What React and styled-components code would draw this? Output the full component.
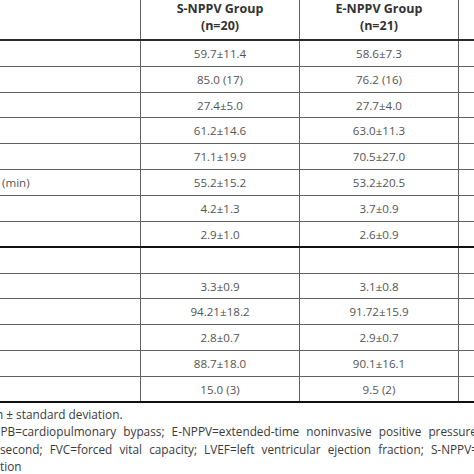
import React from "react";
import styled, { createGlobalStyle } from "styled-components";

const Global = createGlobalStyle`
  html, body {
    margin: 0;
    padding: 0;
    background: #fff;
    overflow: hidden;
  }
  body {
    width: 474px;
    height: 474px;
    font-family: "Open Sans", "Noto Sans", sans-serif;
  }
`;

const Page = styled.div`
  width: 474px;
  height: 474px;
  overflow: hidden;
  background: #fff;
`;

const Table = styled.div`
  width: 520px;
  display: flex;
  flex-direction: column;
`;

const Row = styled.div`
  display: grid;
  grid-template-columns: 141px 159px 159px 1fr;
  box-sizing: border-box;
  height: ${(p) => p.$h}px;
  border-bottom: ${(p) =>
    p.$rule === "thick"
      ? "2px solid #111"
      : p.$rule === "head"
      ? "2px solid #2a2a2a"
      : "1.5px solid #606060"};
`;

const Cell = styled.div`
  box-sizing: border-box;
  border-right: 1.5px solid #606060;
  display: flex;
  align-items: center;
  justify-content: ${(p) => (p.$left ? "flex-start" : "center")};
  padding-left: ${(p) => (p.$left ? "2px" : "0")};
  font-size: 11.6px;
  color: #555;
  white-space: nowrap;
  &:last-child {
    border-right: none;
  }
`;

const HeadCell = styled(Cell)`
  flex-direction: column;
  justify-content: flex-start;
  align-items: center;
  font-size: 12.5px;
  font-weight: 700;
  line-height: 17px;
  color: #333;
`;

const Notes = styled.div`
  padding-top: 3px;
  font-size: 11.8px;
  line-height: 17.4px;
  color: #3a3a3a;
`;

const NoteLine = styled.div`
  margin-left: ${(p) => p.$shift || 0}px;
  width: ${(p) => (p.$w ? `${p.$w}px` : "auto")};
  text-align: ${(p) => (p.$w ? "justify" : "left")};
  text-align-last: ${(p) => (p.$w ? "justify" : "auto")};
  white-space: ${(p) => (p.$w ? "normal" : "nowrap")};
`;

const rows = [
  { a: "59.7±11.4", b: "58.6±7.3", h: 26 },
  { a: "85.0 (17)", b: "76.2 (16)", h: 26 },
  { a: "27.4±5.0", b: "27.7±4.0", h: 25 },
  { a: "61.2±14.6", b: "63.0±11.3", h: 26 },
  { a: "71.1±19.9", b: "70.5±27.0", h: 26 },
  { a: "55.2±15.2", b: "53.2±20.5", h: 26, label: "(min)" },
  { a: "4.2±1.3", b: "3.7±0.9", h: 26 },
  { a: "2.9±1.0", b: "2.6±0.9", h: 26, rule: "thick" },
  { a: "", b: "", h: 26 },
  { a: "3.3±0.9", b: "3.1±0.8", h: 25 },
  { a: "94.21±18.2", b: "91.72±15.9", h: 26 },
  { a: "2.8±0.7", b: "2.9±0.7", h: 26 },
  { a: "88.7±18.0", b: "90.1±16.1", h: 26 },
  { a: "15.0 (3)", b: "9.5 (2)", h: 26, rule: "thick" },
];

export default function App() {
  return (
    <Page>
      <Global />
      <Table>
        <Row $h={41} $rule="head">
          <HeadCell />
          <HeadCell>
            <span>S-NPPV Group</span>
            <span>(n=20)</span>
          </HeadCell>
          <HeadCell>
            <span>E-NPPV Group</span>
            <span>(n=21)</span>
          </HeadCell>
          <HeadCell />
        </Row>
        {rows.map((r, i) => (
          <Row key={i} $h={r.h} $rule={r.rule}>
            <Cell $left>{r.label || ""}</Cell>
            <Cell>{r.a}</Cell>
            <Cell>{r.b}</Cell>
            <Cell />
          </Row>
        ))}
      </Table>
      <Notes>
        <NoteLine $shift={-4}>n ± standard deviation.</NoteLine>
        <NoteLine $shift={-7} $w={484}>
          CPB=cardiopulmonary bypass; E-NPPV=extended-time noninvasive positive pressure
        </NoteLine>
        <NoteLine $w={478}>
          second; FVC=forced vital capacity; LVEF=left ventricular ejection fraction; S-NPPV=
        </NoteLine>
        <NoteLine>tion</NoteLine>
      </Notes>
    </Page>
  );
}
